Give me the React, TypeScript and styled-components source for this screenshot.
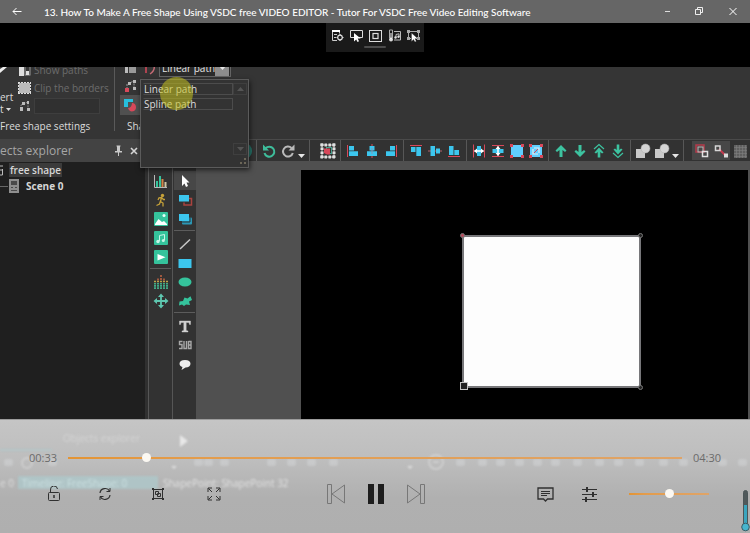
import React, { useState } from "react";
import styled, { createGlobalStyle, css } from "styled-components";

const sans = `"Open Sans", "Noto Sans", sans-serif`;
const cyan = "#3cc6ee";
const teal = "#35c39c";
const red = "#d8485a";

const GlobalStyle = createGlobalStyle`
  *, *::before, *::after { box-sizing: border-box; }
  body { margin: 0; background: #000; font-family: ${sans}; }
  button { border: 0; padding: 0; background: none; color: inherit; font: inherit; }
  svg { display: block; }
`;

const Window = styled.div`
  position: relative;
  display: flex;
  flex-direction: column;
  min-width: 0;
  height: 100vh;
  overflow: hidden;
  background: #000;
`;

const TitleBar = styled.header`
  display: flex;
  align-items: center;
  flex: none;
  height: 23px;
  background: #666;
  color: #fff;
`;

const CaptionButton = styled.button`
  display: grid;
  place-items: center;
  width: 34px;
  height: 23px;
`;

const Title = styled.h1`
  flex: 1;
  margin: 0;
  padding-left: 10px;
  font-family: Lato, "Open Sans", sans-serif;
  font-size: 10px;
  line-height: 16px;
  font-weight: 500;
  white-space: nowrap;
  overflow: hidden;
`;

const Letterbox = styled.div`
  display: flex;
  flex: none;
  justify-content: center;
  align-items: flex-start;
  height: 44px;
  background: #000;
`;

const QuickTools = styled.div`
  display: grid;
  grid-template-columns: repeat(5, 19px);
  justify-content: center;
  justify-items: center;
  align-content: start;
  gap: 3px 0;
  width: 98px;
  height: 29px;
  padding-top: 6px;
  background: #1a1a1a;
`;

const PlainButton = styled.button`
  display: grid;
  place-items: center;
`;

const Handle = styled.span`
  grid-column: 1 / -1;
  width: 22px;
  height: 2px;
  border-radius: 1px;
  background: #4c4c4c;
`;

const Ribbon = styled.section`
  position: relative;
  z-index: 2;
  display: flex;
  flex: none;
  height: 72px;
  background: #353535;
  color: #dcdcdc;
  font-size: 10px;
  line-height: 16px;
`;

const RibbonGroup = styled.div<{ $width: number }>`
  display: flex;
  flex-direction: column;
  justify-content: flex-end;
  flex: none;
  width: ${(p) => p.$width}px;
  height: 72px;
  overflow: hidden;
  white-space: nowrap;
`;

const RibbonColumns = styled.div`
  display: flex;
  flex: none;
`;

const CutButton = styled.button`
  display: flex;
  flex-direction: column;
  justify-content: flex-end;
  width: 18px;
  height: 54px;
  line-height: 12px;
  text-align: left;
`;

const CutLine = styled.span`
  display: flex;
  align-items: center;
  gap: 2px;
  height: 12px;
`;

const RibbonStack = styled.div`
  display: flex;
  flex-direction: column;
`;

const RibbonRow = styled.label`
  display: flex;
  align-items: center;
  gap: 3px;
  height: 18px;
  color: #6c6c6c;
`;

const Stepper = styled.input`
  width: 66px;
  height: 16px;
  border: 1px solid #3e3e3e;
  background: #303030;
  color: #6c6c6c;
`;

const RibbonCaption = styled.div<{ $indent?: number }>`
  flex: none;
  height: 16px;
  margin: 3px 0 5px;
  padding-left: ${(p) => p.$indent ?? 0}px;
`;

const RibbonRule = styled.span`
  width: 1px;
  height: 64px;
  background: #5a5a5a;
`;

const ShapeGrid = styled.div`
  display: grid;
  grid-template-columns: 20px 19px 72px;
  grid-template-rows: 18px 18px 20px;
  align-items: center;
  justify-items: center;
  margin-left: 5px;
`;

const ShapeButton = styled.button<{ $active?: boolean }>`
  display: grid;
  place-items: center;
  width: 20px;
  height: 20px;
  background: ${(p) => (p.$active ? "#505050" : "transparent")};
`;

const PathPicker = styled.button`
  display: flex;
  justify-content: space-between;
  align-items: center;
  width: 72px;
  height: 17px;
  padding: 0 1px 0 2px;
  border: 1px solid #646464;
  background: #2b2b2b;
  color: #e4e4e4;
  line-height: 14px;
`;

const PickerArrow = styled.span`
  display: grid;
  place-items: center;
  width: 14px;
  height: 15px;
  background: #8d8d8d;
`;

const Menu = styled.div`
  position: absolute;
  top: 12px;
  left: 140px;
  display: grid;
  grid-template-columns: 90px 14px;
  justify-content: space-between;
  width: 109px;
  height: 89px;
  padding: 3px 2px 0 2px;
  border: 1px solid #5b5b5b;
  background: #333;
  box-shadow: 1px 2px 5px #0009;
`;

const MenuList = styled.div`
  display: grid;
  align-content: start;
  gap: 3px;
`;

const MenuItem = styled.button`
  height: 12px;
  border: 1px solid #4c4c4c;
  border-left-color: transparent;
  color: #dedede;
  line-height: 10px;
  text-align: left;
`;

const MenuScroll = styled.div`
  display: flex;
  flex-direction: column;
  justify-content: space-between;
  padding-bottom: 12px;
  color: #555;
`;

const ScrollButton = styled.button`
  display: grid;
  place-items: center;
  height: 12px;
  border: 1px solid #3f3f3f;
`;

const Grip = styled.svg`
  position: absolute;
  right: 2px;
  bottom: 2px;
`;

const ClickGlow = styled.span`
  position: absolute;
  top: 10px;
  left: 160px;
  width: 33px;
  height: 33px;
  border-radius: 50%;
  background: #c5c11d;
  opacity: 0.55;
`;

const Workspace = styled.main`
  display: flex;
  flex: 1;
  min-height: 0;
  background: #353535;
`;

const Explorer = styled.aside`
  display: flex;
  flex-direction: column;
  flex: none;
  width: 148px;
  border-right: 3px solid #303030;
  background: #1f1f1f;
  color: #d6d6d6;
`;

const ExplorerHead = styled.div`
  display: flex;
  align-items: center;
  gap: 8px;
  height: 23px;
  padding-right: 7px;
  background: #434343;
`;

const ExplorerTitle = styled.h2`
  flex: 1;
  margin: 0;
  color: #a6a6a6;
  font-size: 12px;
  line-height: 20px;
  font-weight: 400;
  white-space: nowrap;
`;

const Tree = styled.ul`
  margin: 0;
  padding: 0;
  list-style: none;
  font-size: 10px;
  font-weight: 600;
  line-height: 14px;
`;

const TreeNode = styled.li<{ $child?: boolean }>`
  display: flex;
  align-items: center;
  gap: ${(p) => (p.$child ? 6 : 4)}px;
  height: 16px;
  font-weight: ${(p) => (p.$child ? 700 : 600)};
`;

const TreeLabel = styled.span<{ $selected?: boolean }>`
  padding: 0 1px;
  background: ${(p) => (p.$selected ? "#3b3b3b" : "transparent")};
`;

const EditorPane = styled.div`
  display: flex;
  flex-direction: column;
  flex: 1;
  min-width: 0;
  background: #505050;
`;

const Toolbar = styled.div`
  display: flex;
  flex: none;
  height: 22px;
  border-top: 1px solid #4a4a4a;
  background: #323232;
  overflow: hidden;
`;

const ToolGroup = styled.div<{ $lead?: number }>`
  display: flex;
  align-items: center;
  flex: none;
  padding: 0 3px 0 ${(p) => p.$lead ?? 2}px;
  border-right: 1px solid #575757;
`;

const toolBase = css<{ $active?: boolean }>`
  display: grid;
  place-items: center;
  flex: none;
  height: 19px;
  background: ${(p) => (p.$active ? "#474747" : "transparent")};
`;

const Tool = styled.button<{ $active?: boolean }>`
  ${toolBase}
  width: 19px;
`;

const CaretTool = styled.button`
  display: grid;
  align-content: end;
  justify-content: center;
  width: 9px;
  height: 14px;
`;

const Board = styled.div`
  display: flex;
  flex: 1;
  min-height: 0;
`;

const ToolColumn = styled.div`
  display: flex;
  flex-direction: column;
  flex: none;
  width: 24px;
  padding: 10px 0 0 1px;
  border-left: 1px solid #565656;
  background: #323232;
`;

const ColumnTool = styled.button<{ $active?: boolean }>`
  ${toolBase}
  width: 22px;
`;

const ColumnRule = styled.hr`
  flex: none;
  width: 21px;
  height: 1px;
  margin: 2px 0 3px;
  border: 0;
  background: #5c5c5c;
`;

const CanvasWrap = styled.div`
  flex: 1;
  display: flex;
  padding: 9px 2px 0 105px;
`;

const Canvas = styled.div`
  position: relative;
  flex: 1;
  background: #000;
`;

const FreeShape = styled.div`
  position: absolute;
  top: 65px;
  left: 36%;
  width: 40%;
  height: 153px;
  border: 2px solid #77777a;
  border-radius: 3px;
  background: #fdfdfd;
`;

const Node = styled.span<{ $corner: "tl" | "tr" | "bl" | "br" }>`
  position: absolute;
  ${(p) => (p.$corner[0] === "t" ? "top: -4px;" : "bottom: -4px;")}
  ${(p) => (p.$corner[1] === "l" ? "left: -4px;" : "right: -4px;")}
  width: ${(p) => (p.$corner === "bl" ? 8 : 5)}px;
  height: ${(p) => (p.$corner === "bl" ? 8 : 5)}px;
  border: ${(p) => (p.$corner === "bl" ? "1px solid #c5c5c5" : "1px solid #777")};
  border-radius: ${(p) => (p.$corner === "bl" ? 0 : 3)}px;
  background: ${(p) => (p.$corner === "tl" ? "#b84a5c" : "#222")};
`;

const Player = styled.footer`
  position: relative;
  z-index: 3;
  flex: none;
  height: 114px;
  padding: 30px 29px 0;
  background: linear-gradient(#c5c5c5 0, #bdbdbd 42px, #b9b9b9 52px, #b0b0b0 78px, #afafaf 100%);
  border-top: 1px solid #9c9c9c;
`;

const Reflection = styled.svg`
  position: absolute;
  inset: 0;
  width: 100%;
  height: 100%;
  filter: blur(1px);
  font-family: ${sans};
`;

const TimeRow = styled.div`
  position: relative;
  display: flex;
  align-items: center;
  gap: 11px;
  height: 16px;
  color: #6b6b6b;
  font-size: 11px;
  line-height: 16px;
`;

const Range = styled.input`
  appearance: none;
  min-width: 0;
  height: 14px;
  margin: 0;
  background: transparent;
  &::-webkit-slider-runnable-track {
    height: 2px;
    background: linear-gradient(90deg, #e39434 0, #e39c4c 20%, #dfa468 100%);
  }
  &::-webkit-slider-thumb {
    appearance: none;
    width: 9px;
    height: 9px;
    margin-top: -4px;
    border-radius: 50%;
    background: #fbf8f2;
  }
`;

const SeekRange = styled(Range)`
  flex: 1;
`;

const VolumeRange = styled(Range)`
  width: 80px;
  margin-left: 14px;
`;

const Controls = styled.div`
  position: relative;
  display: grid;
  grid-template-columns: 1fr auto 1fr;
  align-items: center;
  height: 32px;
  margin-top: 12px;
  color: #303030;
`;

const LeftControls = styled.div`
  display: grid;
  grid-template-columns: 50px 52px 54px 58px;
`;

const Transport = styled.div`
  display: grid;
  grid-template-columns: repeat(3, 40px);
  padding-left: 2px;
`;

const RightControls = styled.div`
  display: flex;
  justify-content: flex-end;
  align-items: center;
  gap: 8px;
  padding-right: 12px;
`;

const RightButton = styled(PlainButton)`
  width: 36px;
`;

const Thermometer = styled.svg`
  position: absolute;
  right: 0;
  bottom: 1px;
`;

type Draw = { children: React.ReactNode; size?: number; w?: number };
const Icon = ({ children, size = 16, w }: Draw) => (
  <svg width={w ?? size} height={size} viewBox={`0 0 ${w ?? size} ${size}`} fill="none" aria-hidden="true">
    {children}
  </svg>
);

const Caret = () => (
  <Icon size={4} w={7}><path d="M0 0h7L3.5 4z" fill="#e6e6e6" /></Icon>
);

const corners = (a: number, b: number) =>
  [[a, a], [b, a], [a, b], [b, b]].map(([x, y]) => <rect key={`${x}-${y}`} x={x} y={y} width="3" height="3" fill={red} />);

const icons: Record<string, React.ReactNode> = {
  globe: <circle cx="8" cy="8" r="8" fill="#27796e" />,
  undo: <><path d="M4.5 5.500A5 5 0 1 1 3.500 10" stroke="#3ebd9b" strokeWidth="2" /><path d="M2 1.500v6h6z" fill="#3ebd9b" /></>,
  redo: <><path d="M11.5 5A5 5 0 1 0 12.8 10" stroke="#b9b9b9" strokeWidth="2" /><path d="M14.500 1.500v6H8.500z" fill="#b9b9b9" /></>,
  frame: <><rect x="2" y="2" width="12" height="12" stroke="#b8b8b8" /><g fill="#e0e0e0">{[1, 5, 9, 13].flatMap((v) => [<rect key={`a${v}`} x={v - 0.5} y="0.5" width="2.5" height="3" />, <rect key={`b${v}`} x={v - 0.5} y="12.5" width="2.5" height="3" />, <rect key={`c${v}`} x="0.5" y={v - 0.5} width="3" height="2.5" />, <rect key={`d${v}`} x="12.5" y={v - 0.5} width="3" height="2.5" />])}</g><rect x="6.500" y="4.500" width="5" height="6" stroke="#49a18f" /><path d="M4 5.500h6v6H7L4 10z" fill={red} /></>,
  left: <><path d="M2.500 2v12" stroke={red} /><path d="M4 3h5v4.500H4zM4 8.300h9V13H4z" fill={cyan} /></>,
  center: <><path d="M8 1v3M8 12v3" stroke={red} /><path d="M5.500 3h5v4.500h-5zM3 8.300h10V13H3z" fill={cyan} /><path d="M8 5v6" stroke="#8795b5" /></>,
  right: <><path d="M13.500 2v12" stroke={red} /><path d="M7 3h5v4.500H7zM3 8.300h9V13H3z" fill={cyan} /></>,
  top: <><path d="M2 2.500h12" stroke={red} /><path d="M3 4h4.500v5H3zM8.300 4H13v9H8.300z" fill={cyan} /></>,
  middle: <><path d="M1 8h14" stroke="#b3606b" /><path d="M3.500 3h4.500v10H3.500zM9 5.500h4v5H9z" fill={cyan} /></>,
  bottom: <><path d="M2 13.500h12" stroke={red} /><path d="M3 3h4.500v9H3zM8.300 7H13v5H8.300z" fill={cyan} /></>,
  sameWidth: <><path d="M2.500 1.500v13M13.500 1.500v13" stroke={red} /><path d="M6 3h4v10H6z" fill={cyan} /><path d="M3.500 8h9" stroke="#fff" strokeWidth="1.500" /><path d="M3 8l3-2.500v5zM13 8l-3-2.500v5z" fill="#fff" /></>,
  sameHeight: <><path d="M2 2.500h12M2 13.500h12" stroke={red} /><path d="M2.500 6h11v4h-11z" fill={cyan} /><path d="M8 3.500v9" stroke="#fff" strokeWidth="1.500" /><path d="M8 3l2.500 3h-5zM8 13l2.500-3h-5z" fill="#fff" /></>,
  sameSize: <><rect x="2" y="2" width="12" height="12" rx="1" fill="#60cfff" />{corners(1, 12)}</>,
  sameBoth: <><rect x="2" y="2" width="12" height="12" rx="1" fill="#60cfff" />{corners(1, 12)}<path d="M6 5h5v5M5 6v5h5" stroke="#e5eef4" strokeWidth="1.200" /><path d="M6 10l4-4" stroke={red} /></>,
  up: <path d="M8 2l5.500 5.500L12 9 9.500 7v7h-3V7L4 9 2.500 7.500z" fill="#3dc3a0" />,
  down: <path d="M8 14l5.500-5.500L12 7 9.500 9V2h-3v7L4 7 2.500 8.500z" fill="#3dc3a0" />,
  upTop: <><path d="M3 6l5-4.500L13 6" stroke="#3dc3a0" strokeWidth="1.200" /><path d="M8 4.500l4.500 5-1.500 1L9.300 9v5.500H6.700V9L5 10.500l-1.500-1z" fill="#3dc3a0" /></>,
  downEnd: <><path d="M3 10l5 4.500L13 10" stroke="#3dc3a0" strokeWidth="1.200" /><path d="M8 11.500l4.500-5-1.500-1L9.300 7V1.500H6.700V7L5 5.500l-1.500 1z" fill="#3dc3a0" /></>,
  union: <><rect x="1" y="6" width="9" height="9" fill="#c9c9c9" /><circle cx="10.500" cy="5.500" r="4.500" fill="#d4d4d4" stroke="#aaa" strokeWidth="0.500" /></>,
  snapObj: <><rect x="2" y="2" width="8" height="7" stroke="#b53b4b" strokeWidth="1.500" /><rect x="4" y="4" width="5" height="5" stroke="#bbb" /><rect x="8.500" y="8.500" width="5" height="5" stroke="#e2e2e2" strokeWidth="1.500" /></>,
  snapLine: <><path d="M6 6l7 7" stroke="#c43b50" strokeWidth="2" /><rect x="2.500" y="3" width="4.500" height="4.500" stroke="#d6d6d6" strokeWidth="1.500" /><rect x="11" y="10.500" width="4" height="4" fill="#ddd" /></>,
  grid: <><rect x="2" y="2" width="13" height="13" fill="#5f5f5f" /><path d="M4.500 2v13M7.500 2v13M10.500 2v13M13.500 2v13M2 4.500h13M2 7.500h13M2 10.500h13M2 13.500h13" stroke="#808080" strokeWidth="0.600" /></>,
  chart: <><path d="M1.500 2v12.500H14" stroke="#b9b9b9" /><path d="M4 8v6M7 3v11" stroke="#35c39c" strokeWidth="2" /><path d="M9.500 6v8" stroke="#cf8546" strokeWidth="2" /><path d="M12.500 9v5" stroke="#cfc7a4" strokeWidth="2" /></>,
  runner: <><circle cx="9.500" cy="3.500" r="1.700" fill="#c5a139" /><path d="M8.500 5.500L7.500 9.500l2.500 1.500v3.500M7.500 9L6.500 12 3.500 13.500M5 8l1-2.200 2.500-.3 2 2H12" stroke="#c5a139" strokeWidth="1.300" /></>,
  image: <><rect x="1" y="1" width="14" height="14" rx="1" fill={teal} /><path d="M2 13l3.500-5 3.500 3 2-1 3 3v1H2z" fill="#fff" /><circle cx="11" cy="4.500" r="1.500" fill="#e7fff8" /></>,
  music: <><rect x="1" y="1" width="14" height="14" rx="1" fill={teal} /><path d="M6.500 11V5.500l5-1V10" stroke="#c9f4e8" /><circle cx="5" cy="11.500" r="1.700" fill="#c9f4e8" /><circle cx="10.300" cy="10.500" r="1.500" fill="#c9f4e8" /></>,
  video: <><rect x="1" y="1" width="14" height="14" rx="1" fill={teal} /><path d="M4.500 5l8 3.200-8 3.200z" fill="#fff" /></>,
  spectrum: <><path d="M1 7.500h14" stroke="#b9a24a" strokeWidth="1.400" strokeDasharray="2 1" /><path d="M8 1v6M5 4.500v2.500M11 4.500v2.500" stroke="#cf6945" strokeWidth="1.400" strokeDasharray="2 1" /><path d="M1 9.700h14M1 11.900h14M1 14.100h14" stroke="#42aa86" strokeWidth="1.600" strokeDasharray="2 1" /></>,
  move: <><path d="M8 2v12M2 8h12" stroke="#5ec7b0" strokeWidth="1.800" /><path d="M8 .5L11 4H5zM8 15.500L5 12h6zM.5 8L4 5v6zM15.500 8L12 11V5z" fill="#5ec7b0" /></>,
  cursor: <path d="M5 2v11l2.500-2.500 1.500 3.500 2-1-1.500-3.500h3z" fill="#fff" />,
  layersRed: <><path d="M12 6.500h2.500v6.500H7v-2.500" stroke="#a9433f" strokeWidth="1.500" /><rect x="2" y="3" width="10" height="6.500" fill={cyan} /></>,
  layers: <><rect x="5" y="6.500" width="10" height="7" rx="1" fill="#2b97b5" /><path d="M3.500 11h9.500V5" stroke="#29363b" /><rect x="2" y="3" width="10" height="7" fill={cyan} /></>,
  line: <path d="M3 13L13 3.500" stroke="#c8c8c8" strokeWidth="1.500" />,
  rect: <rect x="1.500" y="4" width="13" height="9" fill={cyan} />,
  ellipse: <ellipse cx="8" cy="8" rx="6.500" ry="4.500" fill={teal} />,
  free: <path d="M2 12.500l.5-4 3.500-.5 1.500-3.500 3 1 3-2.200L15 7l-3 1.500 1 3.500-4-.5-2 1.500-2-1.500z" fill={teal} />,
  text: <path d="M2.500 3h11v3.500h-1L12 4.500H9.200v8l1.800.5v1H5v-1l1.800-.5v-8H4l-.5 2h-1z" fill="#d2d2d2" stroke="#d2d2d2" strokeWidth="0.400" />,
  sub: <g stroke="#a8a8a8" strokeWidth="1.400"><path d="M5.500 4.500h-3v3h2.500v4H2M7 4v7.500h2.500V4M11.500 4v7.500H14V4.500h-2.500M11.500 8H14" /></g>,
  bubble: <path d="M8 4c3.600 0 5.500 1.600 5.500 3.700S11.600 11.500 8.500 11.500L4.500 14l1-3C3.500 10.500 2.500 9.300 2.500 7.700 2.500 5.600 4.400 4 8 4z" fill="#eee" />,
};

const Draw16 = ({ name }: { name: string }) => <Icon>{icons[name]}</Icon>;

const quick: [string, React.ReactNode][] = [
  ["Playlist settings", <><path d="M1 1h8v2H1z" fill="#fff" /><path d="M1.500 3v8.500H6M8.500 3v1.500M3 5.500h3M3 8.500h2" stroke="#ccc" /><circle cx="9" cy="8.500" r="2.300" stroke="#ddd" strokeWidth="1.200" /><path d="M9 5v1.500M9 10.500V12M5.500 8.500H7M11 8.500h1.500" stroke="#ddd" strokeWidth="1.200" /></>],
  ["Select display", <><path d="M4 8.500H.5v-7h12v7H9" stroke="#ddd" /><path d="M4 4v8.500l2.200-2L7.500 13l1.500-.7-1.300-2.800h3z" fill="#fff" /></>],
  ["Frame size", <><rect x=".500" y="1.500" width="12" height="11" stroke="#ddd" /><rect x="4" y="4.500" width="5" height="5" stroke="#ddd" strokeWidth="1.200" /></>],
  ["Audio level", <><path d="M1.500 1v8M4.500 1v8M1.500 1h3" stroke="#aaa" /><circle cx="3" cy="10.500" r="2" fill="#ddd" /><path d="M3 4v6" stroke="#fff" /><path d="M6 2.500h6.500v8.500H6M8 8.500V5.500l3-.7V8" stroke="#bbb" /><circle cx="7.500" cy="8.500" r="1.200" fill="#ddd" /><circle cx="10.500" cy="7.800" r="1.200" fill="#ddd" /></>],
  ["Pick region", <><path d="M2 2.500h9M2 9.500h2M9 9.500h2M1.500 4v4M11.500 4v4" stroke="#aaa" /><path d="M0 1h3v3H0zM10 1h3v3h-3zM0 8h3v3H0zM10 8h3v3h-3z" fill="#aaa" /><path d="M4.500 4v8.500l2-2L8 13l1.300-.7L8 9.700h3z" fill="#fff" stroke="#1a1a1a" strokeWidth="0.300" /></>],
];

const groups: { lead?: number; tools: [string, string][]; caret?: boolean }[] = [
  { tools: [["undo", "Undo"], ["redo", "Redo"]], caret: true },
  { lead: 8, tools: [["frame", "Crop"]] },
  { tools: [["left", "Align left"], ["center", "Align centre"], ["right", "Align right"]] },
  { tools: [["top", "Align top"], ["middle", "Align middle"], ["bottom", "Align bottom"]] },
  { tools: [["sameWidth", "Same width"], ["sameHeight", "Same height"], ["sameSize", "Same size"], ["sameBoth", "Fit size"]] },
  { tools: [["up", "Up"], ["down", "Down"], ["upTop", "To front"], ["downEnd", "To back"]] },
  { tools: [["union", "Group"], ["union", "Ungroup"]], caret: true },
];

const mediaTools = ["chart", "runner", "image", "music", "video", "-", "spectrum", "move"];
const drawTools = ["cursor", "layersRed", "layers", "-", "line", "rect", "ellipse", "free", "-", "text", "sub", "bubble"];

const ColumnTools = ({ names }: { names: string[] }) => (
  <ToolColumn>
    {names.map((n, i) =>
      n === "-" ? <ColumnRule key={i} /> : (
        <ColumnTool key={i} aria-label={n} $active={n === "cursor"}><Draw16 name={n} /></ColumnTool>
      )
    )}
  </ToolColumn>
);

const ghostMarks = [8, 52, 198, 208, 224, 271, 291, 311, 333, 460, 482, 500, 519, 537, 555, 577, 599, 618, 639, 663, 683, 722, 742];

export default function App() {
  const [seek, setSeek] = useState(33);
  const [volume, setVolume] = useState(51);
  return (
    <Window>
      <GlobalStyle />
      <TitleBar>
        <CaptionButton aria-label="Back">
          <Icon size={9} w={10}><path d="M9.500 4.500H1M4.500 1L1 4.500 4.500 8" stroke="#fff" /></Icon>
        </CaptionButton>
        <Title>13. How To Make A Free Shape Using VSDC free VIDEO EDITOR - Tutor For VSDC Free Video Editing Software</Title>
        <CaptionButton aria-label="Minimize"><Icon size={9}><path d="M4 4.500h8" stroke="#ddd" /></Icon></CaptionButton>
        <CaptionButton aria-label="Restore"><Icon size={9} w={10}><path d="M1.500 2.500h5v5h-5zM3.500 2V.500h5v5H7" stroke="#eee" /></Icon></CaptionButton>
        <CaptionButton aria-label="Close"><Icon size={9} w={8}><path d="M.500 1l7 7M7.500 1l-7 7" stroke="#fff" /></Icon></CaptionButton>
      </TitleBar>

      <Letterbox>
        <QuickTools>
          {quick.map(([label, art]) => (
            <PlainButton key={label} aria-label={label}><Icon size={14} w={13}>{art}</Icon></PlainButton>
          ))}
          <Handle />
        </QuickTools>
      </Letterbox>

      <Ribbon>
        <RibbonGroup $width={114}>
          <RibbonColumns>
            <CutButton>
              <Icon size={24} w={7}><path d="M0 6V2L3 0h4z" fill="#eee" /></Icon>
              <CutLine>ert</CutLine>
              <CutLine>t<Icon size={3} w={5}><path d="M0 0h5L2.500 3z" fill="#ddd" /></Icon></CutLine>
            </CutButton>
            <RibbonStack>
              <RibbonRow>
                <Icon size={14} w={13}><rect x="1" y="3" width="5" height="10" fill="#ddd" /><rect x="7" y="3" width="5" height="9" stroke="#999" /><path d="M8 8h3v4H8z" fill="#ddd" /></Icon>
                Show paths
              </RibbonRow>
              <RibbonRow>
                <Icon size={14} w={13}><rect x="1" y="2" width="11" height="10" fill="#bbb" /><path d="M0 1.500h13M0 12.500h13M.500 1v12M12.500 1v12" stroke="#ddd" strokeDasharray="2 1" /></Icon>
                Clip the borders
              </RibbonRow>
              <RibbonRow>
                <Icon size={14} w={13}><path d="M3 10V6l7-3v8" stroke="#888" strokeDasharray="2 1" /><path d="M2 8h3v4H2zM4 3h3v3H4zM9 2h2v3H9zM9 9h3v3H9z" fill="#bbb" /></Icon>
                <Stepper aria-label="Points" />
              </RibbonRow>
            </RibbonStack>
          </RibbonColumns>
          <RibbonCaption>Free shape settings</RibbonCaption>
        </RibbonGroup>
        <RibbonRule />
        <RibbonGroup $width={120}>
          <ShapeGrid>
            <ShapeButton aria-label="Fill"><Icon size={14} w={12}><rect x="1" y="2" width="3" height="10" fill="#bbb" /><rect x="5" y="2" width="7" height="10" fill="#999" /></Icon></ShapeButton>
            <Icon size={14} w={12}><path d="M2 3v9" stroke={red} strokeWidth="1.500" /><path d="M4 1c8 0 8 8 2 12" stroke="#c56a74" strokeWidth="1.500" /></Icon>
            <PathPicker aria-haspopup="listbox">Linear path<PickerArrow><Caret /></PickerArrow></PathPicker>
            <ShapeButton aria-label="Points"><Icon size={14} w={13}><path d="M3 10V5l7-3v8" stroke="#999" strokeDasharray="2 1" /><path d="M4 3h3v3H4zM9 1h3v3H9zM9 8h3v3H9z" fill="#bbb" /><path d="M1 9h4v4H1z" fill={red} /></Icon></ShapeButton>
            <span /><span />
            <ShapeButton aria-label="Combine" $active><Icon size={14} w={14}><path d="M1 1h9v3H5v5H1z" fill="#27bfdd" /><path d="M9 5c5 0 5 7 2 8s-5 0-6-3c2 0 4-2 4-5z" fill={red} /></Icon></ShapeButton>
          </ShapeGrid>
          <RibbonCaption $indent={12}>Sha</RibbonCaption>
        </RibbonGroup>
        <Menu>
          <MenuList>
            <MenuItem>Linear path</MenuItem>
            <MenuItem>Spline path</MenuItem>
          </MenuList>
          <MenuScroll>
            <ScrollButton aria-label="Scroll up"><Icon size={4} w={7}><path d="M0 4h7L3.500 0z" fill="currentColor" /></Icon></ScrollButton>
            <ScrollButton aria-label="Scroll down"><Icon size={4} w={7}><path d="M0 0h7L3.500 4z" fill="currentColor" /></Icon></ScrollButton>
          </MenuScroll>
          <Grip width="7" height="7" viewBox="0 0 7 7" aria-hidden="true">
            <path d="M5 0h2v2H5zM5 4h2v2H5zM1 4h2v2H1z" fill="#6c6658" />
          </Grip>
        </Menu>
        <ClickGlow />
      </Ribbon>

      <Workspace>
        <Explorer>
          <ExplorerHead>
            <ExplorerTitle>ects explorer</ExplorerTitle>
            <PlainButton aria-label="Pin"><Icon size={12} w={7}><path d="M2 1h3v5H2zM0 6h7v1.500H0zM3 7h1v4H3z" fill="#c9c9c9" /><path d="M1.500 1h4" stroke="#c9c9c9" /></Icon></PlainButton>
            <PlainButton aria-label="Close panel"><Icon size={8} w={8}><path d="M1 1l6 6M7 1L1 7" stroke="#d6d6d6" strokeWidth="1.600" /></Icon></PlainButton>
          </ExplorerHead>
          <Tree>
            <TreeNode>
              <Icon size={12} w={5}><path d="M0 2h3M0 6h3M2.500 5v6H0" stroke="#bbb" /></Icon>
              <TreeLabel $selected>free shape</TreeLabel>
            </TreeNode>
            <TreeNode $child>
              <Icon size={14} w={19}><path d="M0 7.500h8" stroke="#666" /><rect x="9" width="10" height="14" fill="#8e8e8e" /><path d="M11 2h6v4h-6zM11 8h2v1h-2zM15 8h2v1h-2zM11 11h6v1h-6z" fill="#4a4a4a" /></Icon>
              <TreeLabel>Scene 0</TreeLabel>
            </TreeNode>
          </Tree>
        </Explorer>

        <EditorPane>
          <Toolbar>
            <ToolGroup $lead={86}><Tool aria-label="Preview"><Draw16 name="globe" /></Tool></ToolGroup>
            {groups.map((g, i) => (
              <ToolGroup key={i} $lead={g.lead}>
                {g.tools.map(([n, label]) => <Tool key={label} aria-label={label}><Draw16 name={n} /></Tool>)}
                {g.caret && <CaretTool aria-label="More"><Caret /></CaretTool>}
              </ToolGroup>
            ))}
            <ToolGroup $lead={8}>
              <Tool $active aria-label="Snap to objects"><Draw16 name="snapObj" /></Tool>
              <Tool $active aria-label="Snap to lines"><Draw16 name="snapLine" /></Tool>
              <Tool aria-label="Grid"><Draw16 name="grid" /></Tool>
            </ToolGroup>
          </Toolbar>
          <Board>
            <ColumnTools names={mediaTools} />
            <ColumnTools names={drawTools} />
            <CanvasWrap>
              <Canvas>
                <FreeShape>
                  <Node $corner="tl" /><Node $corner="tr" /><Node $corner="bl" /><Node $corner="br" />
                </FreeShape>
              </Canvas>
            </CanvasWrap>
          </Board>
        </EditorPane>
      </Workspace>

      <Player>
        <Reflection aria-hidden="true">
          <path d="M0 30h52" stroke="#a9cdd2" strokeWidth="2" opacity="0.5" />
          <rect x="18" y="56" width="140" height="13" fill="#aec8ca" opacity="0.8" />
          <g fill="#e8e8e8" fontSize="10">
            <text x="63" y="22" opacity="0.5">Objects explorer</text>
            <text x="0" y="67" opacity="0.8">e 0</text>
            <text x="22" y="67" fill="#cfe4e5" opacity="0.9">Timeline: FreeShape: 0</text>
            <text x="163" y="67" opacity="0.9">ShapePoint: ShapePoint 32</text>
          </g>
          <path d="M180 15l8 6-8 6z" fill="#e8e8e8" />
          <path d="M171 46h6l-3 3zM407 46h6l-3 3z" fill="#ddd" />
          <g fill="#dfe2e4" opacity="0.35">
            {ghostMarks.map((x) => <rect key={x} x={x - 4} y="39" width="9" height="7" rx="2" />)}
          </g>
          <g stroke="#e5e5e5" strokeWidth="2" fill="none" opacity="0.45">
            <circle cx="436" cy="42" r="7" />
            <path d="M433 42h6" />
            <circle cx="27" cy="43" r="5" />
          </g>
        </Reflection>
        <TimeRow>
          <span>00:33</span>
          <SeekRange type="range" aria-label="Position" min={0} max={270} value={seek} onChange={(e) => setSeek(Number(e.target.value))} />
          <span>04:30</span>
        </TimeRow>
        <Controls>
          <LeftControls>
            <PlainButton aria-label="Lock"><Icon size={16} w={12}><rect x=".500" y="6.500" width="11" height="8" rx="1" stroke="currentColor" /><path d="M2.500 6.500V4a3.500 3.500 0 0 1 7-1" stroke="currentColor" /><path d="M6 9v3" stroke="currentColor" strokeWidth="1.500" /></Icon></PlainButton>
            <PlainButton aria-label="Repeat"><Icon size={14} w={12}><path d="M1 6c.500-5 7.500-6 9.500-2M11 8c-.500 5-7.500 6-9.500 2" stroke="currentColor" strokeWidth="1.200" /><path d="M11 1v3.500H7.500M1 13V9.500h3.500" stroke="currentColor" /></Icon></PlainButton>
            <PlainButton aria-label="Aspect"><Icon size={12} w={12}><rect x="1.500" y="1.500" width="9" height="9" stroke="currentColor" /><path d="M0 0h2v2H0zM10 0h2v2h-2zM0 10h2v2H0zM10 10h2v2h-2z" fill="currentColor" /><path d="M3.500 3.500h3V6.500h-3zM5.500 5.500H8.500V8.500H5.500z" stroke="currentColor" /></Icon></PlainButton>
            <PlainButton aria-label="Full screen"><Icon size={14} w={14}><path d="M1 5V1h4M9 1h4v4M13 9v4H9M5 13H1V9M1.500 1.500L5 5M12.500 1.500L9 5M12.500 12.500L9 9M1.500 12.500L5 9" stroke="currentColor" /></Icon></PlainButton>
          </LeftControls>
          <Transport>
            <PlainButton aria-label="Previous"><Icon size={20} w={18}><path d="M.500.500h4v19h-4zM17.500 1v18L5 10z" stroke="#777" /></Icon></PlainButton>
            <PlainButton aria-label="Pause"><Icon size={22} w={16}><path d="M0 1h6v20H0zM10 1h6v20h-6z" fill="#1d1d1d" /></Icon></PlainButton>
            <PlainButton aria-label="Next"><Icon size={20} w={18}><path d="M13.500.500h4v19h-4zM.500 1v18L13 10z" stroke="#777" /></Icon></PlainButton>
          </Transport>
          <RightControls>
            <RightButton aria-label="Subtitles"><Icon size={15} w={17}><path d="M1 1h15v11h-5.500l-2 2-2-2H1z" stroke="currentColor" strokeWidth="1.300" /><path d="M4 4.500h9M4 6.500h9M4 8.500h6" stroke="currentColor" /></Icon></RightButton>
            <RightButton aria-label="Adjust"><Icon size={15} w={15}><path d="M0 2.500h15M0 7.500h15M0 12.500h15" stroke="currentColor" /><path d="M4 0h2v5H4zM10 5h2v5h-2zM3 10h2v5H3z" fill="currentColor" /></Icon></RightButton>
            <VolumeRange type="range" aria-label="Volume" value={volume} onChange={(e) => setVolume(Number(e.target.value))} />
          </RightControls>
        </Controls>
        <Thermometer width="9" height="42" viewBox="0 0 9 42" aria-hidden="true">
          <rect x="2.500" y=".500" width="4" height="36" rx="2" fill="#50595b" stroke="#4c5658" />
          <path d="M3 15h3v20H3z" fill="#3aa5be" />
          <circle cx="4.500" cy="37" r="3.800" fill="#46b5ce" stroke="#3a5d67" />
        </Thermometer>
      </Player>
    </Window>
  );
}
